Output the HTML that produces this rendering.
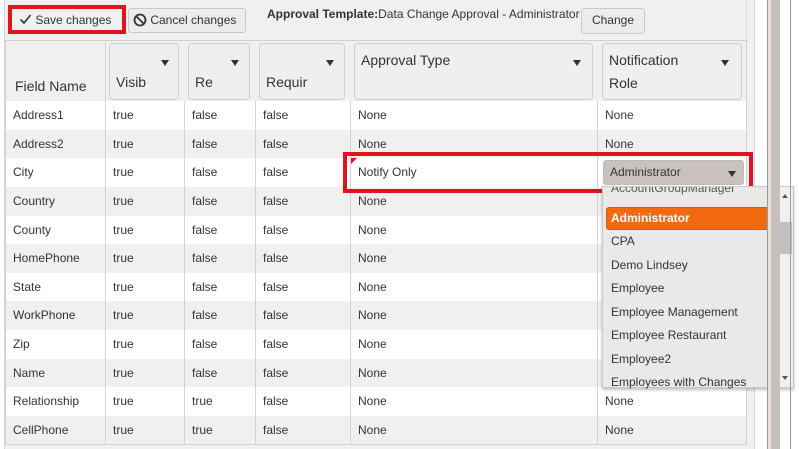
<!DOCTYPE html>
<html><head><style>
*{box-sizing:border-box;margin:0;padding:0}
body{width:799px;height:449px;background:#fff;font-family:"Liberation Sans",Arial,sans-serif;color:#333;position:relative;overflow:hidden}
.abs{position:absolute}
.outer{left:4px;top:0;width:751px;height:449px;border-left:1px solid #d6d6d6;border-right:1px solid #d6d6d6;background:#f1f1f1}
.tb{left:5px;top:0;width:742px;height:40px;background:#f0f0f0;border-right:1px solid #ddd}
.btn{position:absolute;height:25px;border:1px solid #c9c9c9;border-radius:3px;background:#ececec;font-size:12px;line-height:23px;color:#333;padding-left:6px}
.grid{left:5px;top:40px;width:742px;height:405px;border:1px solid #d0d0d0;background:#f0f0f0}
.hd{position:absolute;top:2px;height:57px;border:1px solid #cfcfcf;border-radius:4px;background:#efefef;font-size:14px;color:#333}
.arr{position:absolute;width:0;height:0;border-left:4px solid transparent;border-right:4px solid transparent;border-top:6px solid #333}
.row{position:absolute;left:0;width:740px;height:29px;font-size:12px;line-height:29px}
.row div{position:absolute;top:0;height:100%;padding-left:7px;border-left:1px solid #d3d3d3}
.w{background:#fff}.g{background:#f0f0f0}
.dd{left:602px;top:186px;width:192px;height:202px;background:#e9e9e9;border:1px solid #c8c8c8;box-shadow:0 2px 3px rgba(0,0,0,.25);font-size:12px;color:#333}
.dd .it{position:absolute;left:8px}
</style></head><body>
<div class="abs outer"></div>
<div class="abs tb">
  <div class="btn" style="left:7px;top:8px;width:112px;border-color:transparent;background:#f0f0f0"><svg width="13" height="12" viewBox="0 0 13 12" style="vertical-align:-1px"><path d="M1.5 6.5 L5 10 L11.5 2" fill="none" stroke="#333" stroke-width="1.6"/></svg> Save changes</div>
  <div class="btn" style="left:123px;top:8px;width:118px;padding-left:4px"><svg width="14" height="14" viewBox="0 0 14 14" style="vertical-align:-3px"><circle cx="7" cy="7" r="5.5" fill="none" stroke="#333" stroke-width="1.8"/><line x1="3" y1="3" x2="11" y2="11" stroke="#333" stroke-width="1.8"/></svg> Cancel changes</div>
  <div class="abs" style="left:262px;top:7px;font-size:12px;color:#333"><b>Approval Template:</b>Data Change Approval - Administrator</div>
  <div class="btn" style="left:576px;top:8px;width:64px;height:26px;text-align:center;padding:0">Change</div>
</div>
<div class="abs" style="left:8px;top:5px;width:118px;height:29px;border:4px solid #e0141e"></div>
<div class="abs grid">
  <div class="abs" style="left:9px;top:37px;font-size:14px">Field Name</div>
  <div class="abs" style="left:99px;top:0;width:1px;height:60px;background:#d3d3d3"></div>
  <div class="hd" style="left:103px;width:70px"><div class="arr" style="left:51px;top:16px"></div><span class="abs" style="left:6px;top:30px">Visib</span></div>
  <div class="hd" style="left:182px;width:62px"><div class="arr" style="left:42px;top:16px"></div><span class="abs" style="left:6px;top:30px">Re</span></div>
  <div class="hd" style="left:253px;width:86px"><div class="arr" style="left:66px;top:16px"></div><span class="abs" style="left:6px;top:30px">Requir</span></div>
  <div class="hd" style="left:348px;width:239px"><div class="arr" style="left:218px;top:16px"></div><span class="abs" style="left:6px;top:8px">Approval Type</span></div>
  <div class="hd" style="left:596px;width:140px"><div class="arr" style="left:118px;top:16px"></div><span class="abs" style="left:6px;top:5px;line-height:23px">Notification<br>Role</span></div>
</div>
<div class="abs" style="left:6px;top:101px;width:740px;height:343px">
<div class="row w" style="top:0"><div style="left:0;border:0">Address1</div><div style="left:99px">true</div><div style="left:178px">false</div><div style="left:249px">false</div><div style="left:344px">None</div><div style="left:591px">None</div></div>
<div class="row g" style="top:28.6px"><div style="left:0;border:0">Address2</div><div style="left:99px">true</div><div style="left:178px">false</div><div style="left:249px">false</div><div style="left:344px">None</div><div style="left:591px">None</div></div>
<div class="row w" style="top:57.3px"><div style="left:0;border:0">City</div><div style="left:99px">true</div><div style="left:178px">false</div><div style="left:249px">false</div><div style="left:344px;width:247px">Notify Only<span style="position:absolute;left:0;top:0;width:0;height:0;border-top:6px solid #e0141e;border-right:6px solid transparent"></span></div><div style="left:591px"></div></div>
<div class="row g" style="top:85.9px"><div style="left:0;border:0">Country</div><div style="left:99px">true</div><div style="left:178px">false</div><div style="left:249px">false</div><div style="left:344px">None</div><div style="left:591px"></div></div>
<div class="row w" style="top:114.5px"><div style="left:0;border:0">County</div><div style="left:99px">true</div><div style="left:178px">false</div><div style="left:249px">false</div><div style="left:344px">None</div><div style="left:591px"></div></div>
<div class="row g" style="top:143.2px"><div style="left:0;border:0">HomePhone</div><div style="left:99px">true</div><div style="left:178px">false</div><div style="left:249px">false</div><div style="left:344px">None</div><div style="left:591px"></div></div>
<div class="row w" style="top:171.8px"><div style="left:0;border:0">State</div><div style="left:99px">true</div><div style="left:178px">false</div><div style="left:249px">false</div><div style="left:344px">None</div><div style="left:591px"></div></div>
<div class="row g" style="top:200.4px"><div style="left:0;border:0">WorkPhone</div><div style="left:99px">true</div><div style="left:178px">false</div><div style="left:249px">false</div><div style="left:344px">None</div><div style="left:591px"></div></div>
<div class="row w" style="top:229.1px"><div style="left:0;border:0">Zip</div><div style="left:99px">true</div><div style="left:178px">false</div><div style="left:249px">false</div><div style="left:344px">None</div><div style="left:591px"></div></div>
<div class="row g" style="top:257.7px"><div style="left:0;border:0">Name</div><div style="left:99px">true</div><div style="left:178px">false</div><div style="left:249px">false</div><div style="left:344px">None</div><div style="left:591px"></div></div>
<div class="row w" style="top:286.3px"><div style="left:0;border:0">Relationship</div><div style="left:99px">true</div><div style="left:178px">true</div><div style="left:249px">false</div><div style="left:344px">None</div><div style="left:591px">None</div></div>
<div class="row g" style="top:315px;height:28px"><div style="left:0;border:0">CellPhone</div><div style="left:99px">true</div><div style="left:178px">true</div><div style="left:249px">false</div><div style="left:344px">None</div><div style="left:591px">None</div></div>
</div>
<div class="abs" style="left:603px;top:160px;width:141px;height:25px;border-radius:3px;background:#c9c1bd;border:1px solid #bbb;font-size:12px;line-height:23px;padding-left:6px">Administrator<div class="arr" style="left:124px;top:10px"></div></div>
<div class="abs" style="left:343px;top:152px;width:410px;height:41px;border:4px solid #e0141e"></div>
<div class="abs dd">
  <div class="it" style="top:0px;color:#555;height:8px;overflow:hidden;line-height:2px">AccountGroupManager</div>
  <div class="abs" style="left:3px;top:20px;width:169px;height:23px;background:#f26a10;border:1px solid #d85a05;border-radius:3px;color:#fff;font-weight:bold;line-height:21px;padding-left:4px">Administrator</div>
  <div class="it" style="top:47px">CPA</div>
  <div class="it" style="top:71px">Demo Lindsey</div>
  <div class="it" style="top:94px">Employee</div>
  <div class="it" style="top:118px">Employee Management</div>
  <div class="it" style="top:141px">Employee Restaurant</div>
  <div class="it" style="top:165px">Employee2</div>
  <div class="it" style="top:188px">Employees with Changes</div>
  <div class="abs" style="left:175px;top:0;width:15px;height:200px;background:#f0f0f0"></div>
  <div class="abs" style="left:177px;top:35px;width:12px;height:32px;background:#c1c1c1"></div>
  <div class="abs" style="left:179px;top:7px;border-left:3px solid transparent;border-right:3px solid transparent;border-bottom:4px solid #555"></div>
  <div class="abs" style="left:179px;top:189px;border-left:3px solid transparent;border-right:3px solid transparent;border-top:4px solid #555"></div>
</div>
<div class="abs" style="left:767px;top:0;width:1px;height:449px;background:#999"></div>
<div class="abs" style="left:768px;top:0;width:3px;height:449px;background:#e6e2e0"></div>
<div class="abs" style="left:771px;top:0;width:9px;height:449px;background:#c8bebb"></div>
<div class="abs" style="left:790px;top:0;width:1px;height:449px;background:#999"></div>
</body></html>
